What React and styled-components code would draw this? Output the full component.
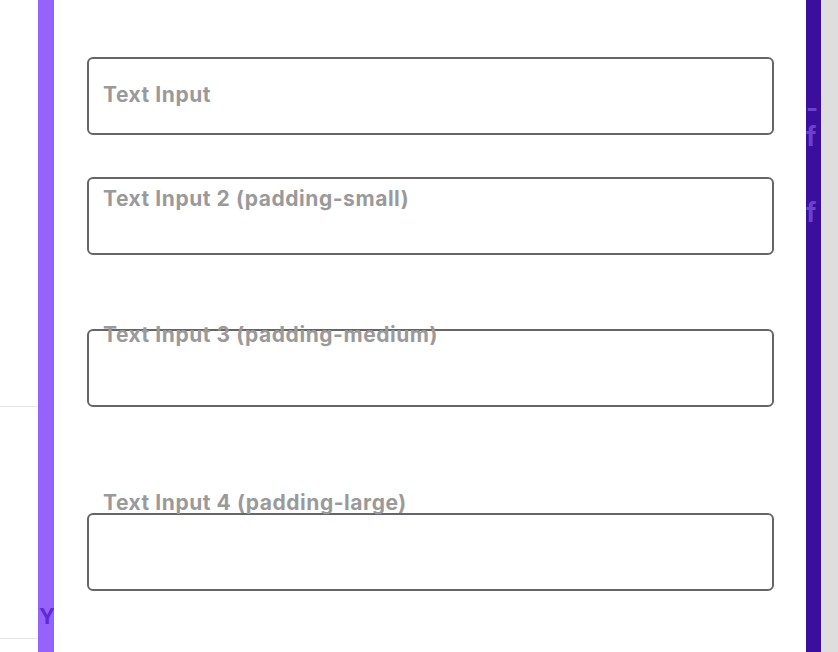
import React from "react";
import styled, { createGlobalStyle } from "styled-components";

const fields = [
  { id: "t1", label: "Text Input", gap: 57, labelTop: 28 },
  { id: "t2", label: "Text Input 2 (padding-small)", gap: 42, labelTop: 12 },
  { id: "t3", label: "Text Input 3 (padding-medium)", gap: 74, labelTop: -4 },
  { id: "t4", label: "Text Input 4 (padding-large)", gap: 106, labelTop: -20 },
];

const App = () => {
  return (
    <>
      <GlobalStyle />
      <Page>
        <Backdrop>
          <Divider $top={406} />
          <Divider $top={231} />
        </Backdrop>
        <LeftBand>
          <BandText>Y</BandText>
        </LeftBand>
        <Modal>
          {fields.map((f) => (
            <Field key={f.id} $gap={f.gap}>
              <Input id={f.id} type="text" />
              <Label htmlFor={f.id} $top={f.labelTop}>
                {f.label}
              </Label>
            </Field>
          ))}
        </Modal>
        <RightBand>
          <Ghost $top={100}>-</Ghost>
          <Ghost $top={13}>f</Ghost>
          <Ghost $top={60}>f</Ghost>
        </RightBand>
        <Scrollbar />
      </Page>
    </>
  );
};

export default App;

const GlobalStyle = createGlobalStyle`
  html, body {
    margin: 0;
    padding: 0;
    background: #fff;
    overflow: hidden;
  }
  * {
    box-sizing: border-box;
  }
`;

const Page = styled.div`
  display: flex;
  height: 652px;
  font-family: "Inter", "Open Sans", sans-serif;
`;

const Backdrop = styled.div`
  width: 38px;
  flex-shrink: 0;
  display: flex;
  flex-direction: column;
`;

const Divider = styled.div`
  height: 1px;
  margin-top: ${(p) => p.$top}px;
  background: #e6e6e6;
`;

const LeftBand = styled.div`
  width: 16px;
  flex-shrink: 0;
  background: #9662fc;
  display: flex;
  flex-direction: column;
  justify-content: flex-end;
  padding-bottom: 24px;
  overflow: hidden;
`;

const BandText = styled.span`
  font-size: 22px;
  font-weight: 700;
  line-height: 24px;
  color: #5a2bd6;
  white-space: nowrap;
  margin-left: 1px;
`;

const Modal = styled.div`
  flex: 1;
  background: #fff;
  padding: 0 32px 0 33px;
  display: flex;
  flex-direction: column;
`;

const Field = styled.div`
  position: relative;
  margin-top: ${(p) => p.$gap}px;
`;

const Input = styled.input`
  display: block;
  width: 100%;
  height: 78px;
  border: 2px solid #666;
  border-radius: 6px;
  background: transparent;
  outline: none;
  font: inherit;
`;

const Label = styled.label`
  position: absolute;
  left: 16px;
  top: ${(p) => p.$top}px;
  font-size: 21px;
  line-height: 20px;
  font-weight: 700;
  letter-spacing: 0.55px;
  color: #9a9a9a;
  white-space: nowrap;
  pointer-events: none;
`;

const RightBand = styled.div`
  width: 15px;
  flex-shrink: 0;
  background: #3b0e9e;
  display: flex;
  flex-direction: column;
  overflow: hidden;
`;

const Ghost = styled.span`
  margin-top: ${(p) => p.$top}px;
  font-size: 26px;
  line-height: 16px;
  height: 16px;
  font-weight: 700;
  color: #6a42cf;
  padding-left: 0;
`;

const Scrollbar = styled.div`
  width: 17px;
  flex-shrink: 0;
  background: #dedede;
`;
